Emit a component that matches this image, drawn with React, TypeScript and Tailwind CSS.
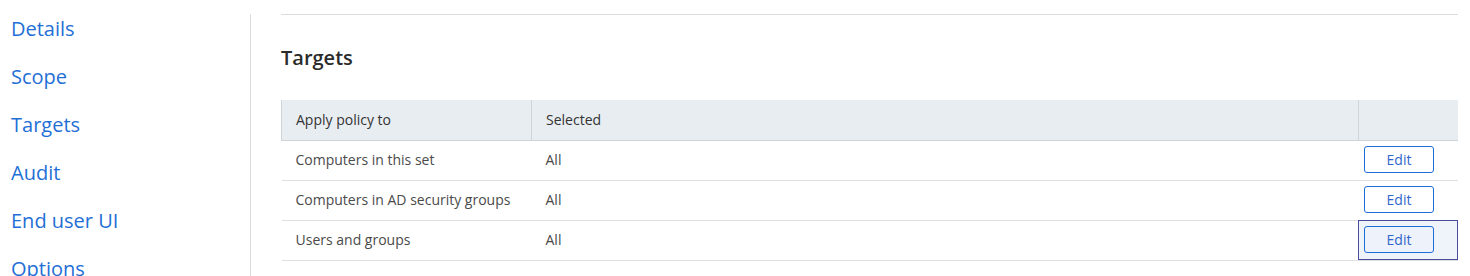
import React from 'react';

const NAV = ['Details', 'Scope', 'Targets', 'Audit', 'End user UI', 'Options'];

const ROWS = [
  { label: 'Computers in this set', selected: 'All' },
  { label: 'Computers in AD security groups', selected: 'All' },
  { label: 'Users and groups', selected: 'All', focused: true },
];

export default function App() {
  return (
    <div
      className="flex h-[276px] w-[1470px] overflow-hidden bg-white"
      style={{ fontFamily: '"Open Sans", "Liberation Sans", sans-serif' }}
    >
      <div className="flex shrink-0">
        <nav className="w-[250px] pt-[5px]">
          {NAV.map((item) => (
            <div key={item} className="flex h-[48px] items-center pl-[11px] text-[20px] text-[#1f6fd6]">
              {item}
            </div>
          ))}
        </nav>
        <div className="mt-[14px] w-px bg-[#dcdcdc]" />
      </div>

      <main className="ml-[30px] mr-[12px] mt-[14px] flex-1 border-t border-[#dcdcdc]">
        <h2 className="mt-[29px] text-[20px] font-semibold leading-[28px] text-[#2b2b2b]">Targets</h2>

        <table className="mt-[28px] w-full border-collapse text-[14px]">
          <thead>
            <tr className="h-[40px] bg-[#e8edf2] text-left text-[#333]">
              <th className="w-[250px] border-b border-l border-[#cfd4d9] pl-[14px] font-normal">Apply policy to</th>
              <th className="border-b border-l border-[#cfd4d9] pl-[14px] font-normal">Selected</th>
              <th className="w-[100px] border-b border-l border-[#cfd4d9] font-normal" />
            </tr>
          </thead>
          <tbody>
            {ROWS.map((row) => (
              <tr key={row.label} className="h-[40px] border-b border-[#e0e0e0] text-[#4a4a4a]">
                <td className="pb-[2px] pl-[14px]">{row.label}</td>
                <td className="pb-[2px] pl-[14px]">{row.selected}</td>
                <td
                  className={`pb-[2px] pl-[6px] ${
                    row.focused ? 'bg-[#eff3fa] outline outline-1 -outline-offset-1 outline-[#4b4b9e]' : ''
                  }`}
                >
                  <button
                    className={`flex h-[27px] w-[70px] items-center justify-center rounded-[3px] border border-[#1c6dd8] text-[14px] text-[#2f66cc] ${
                      row.focused ? 'bg-[#eef2fa]' : 'bg-white'
                    }`}
                  >
                    Edit
                  </button>
                </td>
              </tr>
            ))}
          </tbody>
        </table>
      </main>
    </div>
  );
}
